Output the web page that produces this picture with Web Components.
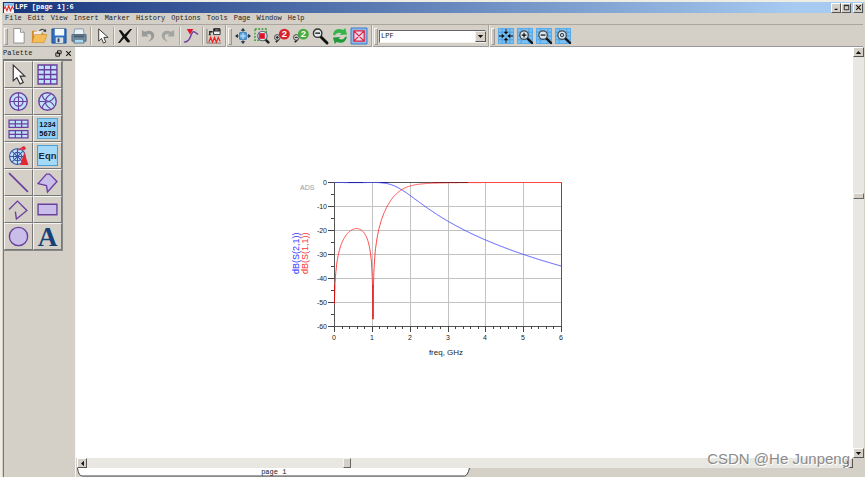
<!DOCTYPE html>
<html lang="en">
<head>
<meta charset="utf-8">
<title>LPF [page 1]:6</title>
<style>
html, body { height: 100%; }
body { margin: 0; background: #d4d0c8; color: #222; font: 7px/9px "Liberation Mono", monospace; overflow: hidden; }
</style>
</head>
<body>
<lpf-window></lpf-window>
<script>
const P = '#6b3fa0', F = '#bfe3fb', L = '#c9bdea';
const lens = (sign) => `<path d="M11 11l5 5" stroke="#111" stroke-width="2.4" stroke-linecap="round"/><circle cx="7.500" cy="7.500" r="4.500" fill="#d9e6ee" stroke="#444" stroke-width="1.300"/>${sign}`;
const blueGrid = '<path d="M0 0h17v17H0z" fill="#79c0f4"/><path d="M0 4.500h17M0 8.500h17M0 12.500h17M4.500 0v17M12.500 0v17" stroke="#4a9bdc" stroke-width=".9"/><path d="M.5.5h16v16H.5z" stroke="#5ca9e4"/>';
const smith = `<circle cx="9" cy="9" r="8.300" fill="${F}" stroke="${P}" stroke-width="1.300"/>`;
const two = (c, s) => `<path d="M5 12l-3 3" stroke="#222" stroke-width="2"/><circle cx="3.500" cy="10" r="3" fill="#ccc" stroke="#444"/><path d="M2 10h3${s ? 'M3.500 8.500v3' : ''}" stroke="#111"/><circle cx="11" cy="6.500" r="5.800" fill="${c}"/><text x="11" y="10" text-anchor="middle" font-family="Liberation Sans, sans-serif" font-weight="bold" font-size="10" fill="#fff">2</text>`;
const ICONS = {
  app: '<path fill="#f4f4f4" d="M0 0h17v17H0z"/><path d="M0 0h17v5H0z" fill="#8cc4ea"/><path d="M0 10l2-4 3 7 3-8 3 8 3-7 3 5" fill="none" stroke="#e23535" stroke-width="2"/>',
  page: '<path d="M3 .5h7l4 4V16H3z" fill="#fff" stroke="#8d8d8d"/><path d="M10 .5v4h4" fill="#e8e8e8" stroke="#8d8d8d"/>',
  open: '<path d="M1 15V3h5l1 2h6v10z" fill="#d28b2c"/><path d="M3 4l8-1v6H3z" fill="#eee"/><path d="M1 15.500L4 7h13l-3 8.500z" fill="#f5bd58" stroke="#c98222" stroke-width=".6"/><path d="M9 3q3-3 6 0" fill="none" stroke="#444" stroke-width="1.400"/><path d="M13 4h3V1z" fill="#333"/>',
  save: '<path d="M1 1h15v15H1z" fill="#2f6fc0" stroke="#1c4c8e"/><path d="M4 1h10v7H4z" fill="#f5f8fb"/><path d="M5 10h8v6H5z" fill="#d9dde2"/><path d="M7 11h2v4H7z" fill="#26456e"/>',
  print: '<path d="M4 1h9l1 6H3z" fill="#e9f3fa" stroke="#89a"/><path d="M1 7h15v7H1z" fill="#738da3" stroke="#51687c"/><path d="M3 8h11v2H3z" fill="#4c5d6b"/><path d="M4 12h9l1 4H3z" fill="#a7dcf4" stroke="#678"/>',
  cursor: '<path d="M5 1v13l3-3 2 5 2.500-1-2-5H15z" fill="#fff" stroke="#333"/>',
  cross: '<path d="M2 3q1-2 3 0l3 4 6-6h2L10 9l4 5q-2 3-4 0L7.500 11 3 16H1l5-7z" fill="#111"/>',
  undo: '<path d="M2 2v7h7L7 7q5-2 5 2 0 3-4 6 8-2 7-8Q13 1 5 4z" fill="#999b98"/>',
  redo: '<path d="M15 2v7H8l2-2q-5-2-5 2 0 3 4 6-8-2-7-8Q4 1 12 4z" fill="#a2a4a0"/>',
  marker: `<path d="M1 15q5 0 7-6t4-5 4 3" fill="none" stroke="${P}" stroke-width="1.500"/><path d="M4 1h7L7.500 7z" fill="#e3122c"/>`,
  plot: '<path d="M1 1v15h15" fill="none" stroke="#777"/><path d="M3 15l2-5 2 5 2-5 2 5 2-5 2 4" fill="none" stroke="#e22" stroke-width="1.300"/><path d="M8 1h7v6H8z" fill="#eee" stroke="#333"/><path d="M9 1h5v2H9zM4 7V4h3M3 7h2" fill="none" stroke="#222" stroke-width="1.400"/>',
  pan: '<path d="M5 5h7v7H5z" fill="#64aee9" stroke="#2b6fae"/><path d="M5 8.500h7M8.500 5v7" stroke="#cbe6fa"/><path d="M8.500 0l2.500 3H6zM8.500 17L6 14h5zM0 8.500L3 6v5zM17 8.500L14 11V6zM8 2h1v2H8zM8 13h1v2H8zM2 8h2v1H2zM13 8h2v1h-2z" fill="#1c3550"/>',
  zoomrect: '<path d="M1 1h12v12H1z" fill="none" stroke="#3b9a33" stroke-width="1.500" stroke-dasharray="2 1.500"/><path d="M12 12l4 4" stroke="#222" stroke-width="2.600"/><circle cx="9" cy="8.500" r="5" fill="#ddeaf5" stroke="#567" stroke-width="1.200"/><path d="M5.500 5.500h6v6h-6z" fill="#df1428"/>',
  zoomin2: two('#d8222d', 1), zoomout2: two('#4aac3d', 0),
  lens: '<path d="M9 9l7 7" stroke="#111" stroke-width="3" stroke-linecap="round"/><circle cx="6" cy="5.500" r="4.500" fill="#e4e9eb" stroke="#333" stroke-width="1.500"/><path d="M3.500 5.500h5" stroke="#222" stroke-width="1.500"/>',
  refresh: '<path d="M1 7Q3-1 12 2l2-2 2 7-8 .5 2-2Q5 4 3 8z" fill="#35b44a"/><path d="M16 9q-2 9-11 6l-2 2-2-7 8-.5-2 2q5 2 7-2z" fill="#229a3b"/>',
  xbox: '<path d="M0 0h17v17H0z" fill="#8fb8ea" stroke="#3877c6"/><path d="M3 3h11v11H3zM3 3l11 11M14 3L3 14" fill="#e5d8ed" stroke="#e02340" stroke-width="1.300"/>',
  fit: blueGrid + '<path d="M8.500 7L6 4h2V1h1v3h2zM8.500 10L11 13H9v3H8v-3H6zM7 8.500L4 11V9H1V8h3V6zM10 8.500L13 6v2h3v1h-3v2z" fill="#111"/>',
  gin: blueGrid + lens('<path d="M5 7.500h5M7.500 5v5" stroke="#111" stroke-width="1.300"/>'),
  gout: blueGrid + lens('<path d="M5 7.500h5" stroke="#111" stroke-width="1.300"/>'),
  gone: blueGrid + lens('<circle cx="7.500" cy="7.500" r="1.800" fill="#9cd0f2" stroke="#333"/>'),
  pArrow: '<path d="M4 0v15l3.500-3 3 6 3-1.500-3-6H15z" fill="#fff" stroke="#333" stroke-width="1.100"/>',
  pGrid: `<path d="M0 0h18v18H0z" fill="${F}"/><path d="M0 0h18v18H0zM0 4.500h18M0 9h18M0 13.500h18M6 0v18M12 0v18" fill="none" stroke="${P}" stroke-width="1.300"/>`,
  pPolar: smith + `<circle cx="9" cy="9" r="4.300" fill="none" stroke="${P}" stroke-width="1.200"/><path d="M1 9h16M9 1v16" stroke="${P}"/>`,
  pSmith: smith + `<path d="M1 9h6M4 3q1 5 6 6 4-1 5-4M4 15q1-5 6-6 4 1 5 4M12 2q-5 3-5 7t5 7" fill="none" stroke="${P}" stroke-width="1.100"/>`,
  pStack: `<path d="M0 1h18v7H0zM0 11h18v7H0z" fill="${F}"/><path d="M0 1h18v7H0zM0 4.500h18M6 1v7M12 1v7M0 11h18v7H0zM0 14.500h18M6 11v7M12 11v7" fill="none" stroke="${P}" stroke-width="1.200"/>`,
  pNums: '<path d="M-.5-.5h19v19h-19z" fill="#8ed0f8" stroke="#5aa5d8"/><g font-family="Liberation Sans, sans-serif" font-size="7" font-weight="bold" fill="#111" text-anchor="middle"><text x="9" y="8">1234</text><text x="9" y="16">5678</text></g>',
  pAnt: `<circle cx="8" cy="10" r="7.500" fill="${F}" stroke="#3950a6"/><circle cx="8" cy="10" r="4" fill="none" stroke="#3950a6"/><path d="M.5 10h15M8 2.500v15M3 5l10 10M3 15L13 5" stroke="#3950a6"/><path d="M14.500 6l4 12h-8z" fill="#e32636"/><circle cx="14" cy="2" r="1.800" fill="#e32636"/><path d="M9 4l4-3" stroke="#e32636"/>`,
  pEqn: '<path d="M-.5-.5h19v19h-19z" fill="#a3dafa" stroke="#4c9fd4"/><text x="9" y="12" text-anchor="middle" font-family="Liberation Sans, sans-serif" font-size="9" font-weight="bold" fill="#1c2b3c">Eqn</text>',
  pLine: `<path d="M0 0l18 18" stroke="${P}" stroke-width="1.600"/>`,
  pPoly: `<path d="M8 1h3l7 7-9 10-1-6-8-2z" fill="${L}" stroke="${P}" stroke-width="1.300"/>`,
  pPath: `<path d="M0 9l8-8 9 9-10 8-1-7" fill="none" stroke="${P}" stroke-width="1.300"/>`,
  pRect: `<path d="M0 4h18v10H0z" fill="${L}" stroke="${P}" stroke-width="1.300"/>`,
  pCirc: `<circle cx="9" cy="9" r="8.700" fill="${L}" stroke="${P}" stroke-width="1.300"/>`,
  pText: '<text x="9" y="18" text-anchor="middle" font-family="Liberation Serif, serif" font-size="26" font-weight="bold" fill="#173f78">A</text>',
  min: '<path d="M4 13h7" stroke="#111" stroke-width="3"/>',
  max: '<path d="M3 3h11v11H3zM3 4h11" fill="none" stroke="#111" stroke-width="2"/>',
  close: '<path d="M3 3l11 11M14 3L3 14" stroke="#111" stroke-width="2.500"/>',
  float: '<path d="M6 2h9v7H6zM2 7h9v8H2z" fill="#d4d0c8" stroke="#111" stroke-width="2.200"/>',
  up: '<path d="M2 12h13L8.500 5z" fill="#111"/>', down: '<path d="M2 5h13l-6.500 7z" fill="#111"/>',
  left: '<path d="M12 2v13L5 8.500z" fill="#111"/>', right: '<path d="M5 2v13l7-6.500z" fill="#111"/>'
};
const svg = (n, box = '0 0 17 17') => `<svg viewBox="${box}" fill="none" aria-hidden="true">${ICONS[n]}</svg>`;
const define = (name, render) => customElements.define(name, class extends HTMLElement {
  connectedCallback() {
    if (!this.shadowRoot) this.attachShadow({ mode: 'open' }).innerHTML = render(this);
  }
});
const reset = 'button{font:inherit;color:inherit;margin:0;padding:0;border:0;background:none;display:grid;place-items:center;box-sizing:border-box;width:100%;height:100%}svg{display:block;overflow:visible}';

define('tool-button', e => `<style>${reset}
:host{display:block;flex:1 1 20px;height:20px}svg{width:16px;height:16px}</style>
<button aria-label="${e.getAttribute('label')}">${svg(e.getAttribute('icon'))}</button>`);

define('small-button', e => `<style>${reset}
:host{display:block;flex:none;width:10px;height:10px}
button{background:#d4d0c8;border:1px solid;border-color:#fff #555 #555 #fff}
:host([flat]) button{border:0}
svg{width:7px;height:7px}</style>
<button aria-label="${e.getAttribute('label')}">${svg(e.getAttribute('icon'))}</button>`);

define('palette-tile', e => `<style>${reset}
:host{display:block}
button{border:1px solid;border-color:#f6f4f0 #777 #777 #f6f4f0}
svg{width:21px;height:21px}</style>
<button aria-label="${e.getAttribute('label')}">${svg(e.getAttribute('icon'), '-1 -1 20 20')}</button>`);

define('tool-group', () => `<style>
:host{display:flex;align-items:center;box-sizing:border-box;height:22px;padding:0 2px;border-right:1px solid #a5a29b;box-shadow:1px 0 #efede8}
i{flex:none;width:2px;height:15px;margin-right:1px;background:#c9c5bd;border:1px solid;border-color:#f8f7f4 #999 #999 #f8f7f4;box-sizing:content-box}
div{display:flex;flex:1;align-items:center}</style><i></i><div><slot></slot></div>`);

define('tool-separator', () => `<style>:host{flex:none;width:1px;height:18px;margin:0 1px;background:#aaa69e;box-shadow:1px 0 #f0eee9}</style>`);

define('title-bar', e => `<style>
:host{display:flex;align-items:center;height:11px;padding:0 1px;background:linear-gradient(90deg,#17347c,#a6caf0 92%);color:#fff;font-weight:bold}
svg{width:10px;height:10px;margin-right:1px}h1{font:inherit;margin:0;flex:1}
small-button:last-child{margin-left:2px}</style>
${svg('app')}<h1><slot></slot></h1>
<small-button icon="min" label="Minimize"></small-button><small-button icon="max" label="Maximize"></small-button><small-button icon="close" label="Close"></small-button>`);

define('menu-bar', e => `<style>${reset}
:host{display:flex;gap:6px;height:11px;padding:0 2px}button{width:auto}</style>
${e.getAttribute('items').split(',').map(t => `<button>${t}</button>`).join('')}`);

define('scroll-bar', e => {
  const v = e.hasAttribute('vertical');
  return `<style>
:host{display:flex;flex-direction:${v ? 'column' : 'row'};background:#e9e7e2;box-sizing:border-box}
.before{flex:0 0 ${e.getAttribute('at')}%}.thumb{flex:none;${v ? 'height:6px' : 'width:8px'};background:#d4d0c8;border:1px solid;border-color:#f5f3ef #666 #666 #f5f3ef;box-sizing:border-box}
.after{flex:1}small-button{${v ? 'width:100%' : 'height:100%'}}</style>
<small-button icon="${v ? 'up' : 'left'}" label="Scroll back"></small-button><div class="before"></div><div class="thumb"></div><div class="after"></div><small-button icon="${v ? 'down' : 'right'}" label="Scroll forward"></small-button>`;
});

define('tool-palette', () => {
  const t = [['pArrow','Select'],['pGrid','Rectangular plot'],['pPolar','Polar'],['pSmith','Smith chart'],['pStack','Stacked plot'],['pNums','List'],['pAnt','Antenna'],['pEqn','Equation'],['pLine','Line'],['pPoly','Polygon'],['pPath','Polyline'],['pRect','Rectangle'],['pCirc','Circle'],['pText','Text']];
  return `<style>
:host{display:flex;flex-direction:column;box-sizing:border-box;padding-right:2px;border-right:1px solid #f8f6f2}
header{display:flex;align-items:center;height:12px}h2{font:inherit;margin:0;flex:1}
section{flex:1;border-left:1px solid #777;border-top:2px solid #777;margin-right:1px}
div{display:grid;grid-template-columns:29px 29px;grid-auto-rows:27px;width:58px;border-right:1px solid #888;border-bottom:1px solid #888}</style>
<header><h2>Palette</h2><small-button flat icon="float" label="Float palette"></small-button><small-button flat icon="close" label="Close palette"></small-button></header>
<section><div>${t.map(([i, l]) => `<palette-tile icon="${i}" label="${l}"></palette-tile>`).join('')}</div></section>`;
});

define('response-chart', () => {
  const X = f => 49 + f * 227 / 6, Y = d => 7 - d * 2.4;
  const et = f => { const x = f / 1.19, t = 4 * x ** 3 - 3 * x; return 0.01217 * t * t; };
  const s21 = f => -10 * Math.log10(1 + et(f));
  const s11 = f => Math.max(f < 0.5 ? -50.5 : -57, 10 * Math.log10(et(f) / (1 + et(f)) + 1e-9));
  const curve = fn => { const p = []; for (let i = 0; i <= 600; i++) p.push(X(i / 100).toFixed(1) + ',' + Y(fn(i / 100)).toFixed(1)); return p.join(' '); };
  let grid = '', ticks = '', labels = '';
  for (let i = 0; i <= 6; i++) {
    const x = Math.round(X(i)), y = Y(-10 * i);
    if (i > 0 && i < 6) grid += `M${x}.5 7v144M49 ${y}.5h227`;
    ticks += `M${x}.5 151v6M49 ${y}.5h-6`;
    if (i < 6) {
      ticks += `M49 ${y + 12}.5h-3`;
      for (let k = 1; k < 5; k++) ticks += `M${Math.round(X(i + k / 5))}.5 151v3`;
    }
    labels += `<text x="${x}" y="165" text-anchor="middle">${i}</text><text x="42" y="${y + 3}" text-anchor="end">${i ? -10 * i : 0}</text>`;
  }
  return `<style>:host{display:block}svg{display:block;width:290px;height:190px;font:7px "Liberation Sans",sans-serif}</style>
<svg viewBox="0 0 290 190" role="img" aria-label="S-parameter response" fill="none">
<path d="${grid}" stroke="#c2c2c2"/><path d="M49.500 7.500H276.500V151.500H49.500Z" stroke="#555"/><path d="${ticks}" stroke="#444"/>
<polyline points="${curve(s21)}" transform="translate(0 .5)" stroke="#4848ff"/>
<polyline points="${curve(s11)}" transform="translate(0 .5)" stroke="#f44"/>
<path d="M183 7.500h93" stroke="#f44"/><path d="M63 7.500h15M95 7.500h8" stroke="#2222a8"/><path d="M148 7.500h35" stroke="#812020"/><path d="M88 110v34M49.500 110v18" stroke="#d01414"/>
<g fill="#222">${labels}<text x="161" y="180" text-anchor="middle" font-size="8">freq, GHz</text></g>
<text x="15" y="15" fill="#999">ADS</text>
<g font-size="9"><text transform="translate(14 99) rotate(-90)" fill="#33f">dB(S(2,1))</text><text transform="translate(23 99) rotate(-90)" fill="#f33">dB(S(1,1))</text></g>
</svg>`;
});

define('page-tab', () => `<style>${reset}
:host{display:block;height:9px}
button{position:relative;isolation:isolate;width:50%;height:9px;line-height:9px}
svg{position:absolute;inset:0;width:100%;height:100%;z-index:-1}</style>
<button><svg viewBox="0 0 394 9" preserveAspectRatio="none"><path d="M.5 0q1 8 5 8H388q3 0 5-8" fill="#fff" stroke="#444"/></svg><slot></slot></button>`);

define('lpf-window', () => {
  const b = (...a) => a.map(([i, l]) => `<tool-button icon="${i}" label="${l}"></tool-button>`).join('');
  const s = '<tool-separator></tool-separator>';
  return `<style>
:host{display:flex;flex-direction:column;box-sizing:border-box;height:100vh;padding:2px 1px 0 3px;background:#d4d0c8;box-shadow:inset 0 2px #efece4,inset 2px 0 #efece4}
.tools{display:flex;border-top:1px solid #aaa69e;border-bottom:1px solid #999;margin-right:1px;height:21px}
.one{width:223px;padding:0 1px}.two{width:146px}.three{width:117px}.four{width:85px;border:0;box-shadow:none}
select{grid-area:1/1/2/3;min-width:0;height:13px;box-sizing:border-box;appearance:none;border:1px solid;border-color:#666 #f4f2ee #f4f2ee #666;border-radius:0;background:none;padding:0 1px;margin:0;font:inherit;color:#222}
.combo{display:grid;flex:1;grid-template-columns:1fr 11px;align-items:center;background:#fff}
.combo svg{grid-area:1/2;width:7px;height:7px;padding:1px;background:#d4d0c8;border:1px solid;border-color:#eee #555 #555 #eee;pointer-events:none}
main{flex:1;min-height:0;display:grid;grid-template-columns:73px minmax(0,1fr) 11px;grid-template-rows:minmax(0,1fr) 10px 9px}
tool-palette{grid-row:1/4}
.canvas{background:#fff;display:grid;place-items:center;padding-right:69px;overflow:hidden}
.canvas response-chart{margin-bottom:-35px}
.h{margin-left:1px}.tab{grid-column:2/4;margin-left:1px}
.mark{position:absolute;right:15px;bottom:9px;font:15px/18px "Liberation Sans",sans-serif;color:#8b8b8b;text-shadow:1px 1px #fff;pointer-events:none}
</style>
<title-bar>LPF [page 1]:6</title-bar>
<menu-bar items="File,Edit,View,Insert,Marker,History,Options,Tools,Page,Window,Help"></menu-bar>
<div class="tools">
<tool-group class="one">${b(['page','New'],['open','Open'],['save','Save'],['print','Print'])}${s}${b(['cursor','Select'])}${s}${b(['cross','Delete'])}${s}${b(['undo','Undo'],['redo','Redo'])}${s}${b(['marker','Marker'])}${s}${b(['plot','Plot options'])}</tool-group>
<tool-group class="two">${b(['pan','Pan'],['zoomrect','Zoom area'],['zoomin2','Zoom in'],['zoomout2','Zoom out'],['lens','Zoom'],['refresh','Refresh'],['xbox','Stop'])}</tool-group>
<tool-group class="three"><span class="combo"><select aria-label="Dataset"><option>LPF</option></select>${svg('down')}</span></tool-group>
<tool-group class="four">${b(['fit','Fit plot'],['gin','Zoom plot in'],['gout','Zoom plot out'],['gone','Reset plot zoom'])}</tool-group>
</div>
<main><tool-palette></tool-palette>
<div class="canvas"><response-chart></response-chart></div>
<scroll-bar vertical at="33"></scroll-bar>
<scroll-bar class="h" at="33"></scroll-bar><span></span>
<page-tab class="tab">page 1</page-tab></main>
<div class="mark">CSDN @He Junpeng</div>`;
});
</script>
</body>
</html>
